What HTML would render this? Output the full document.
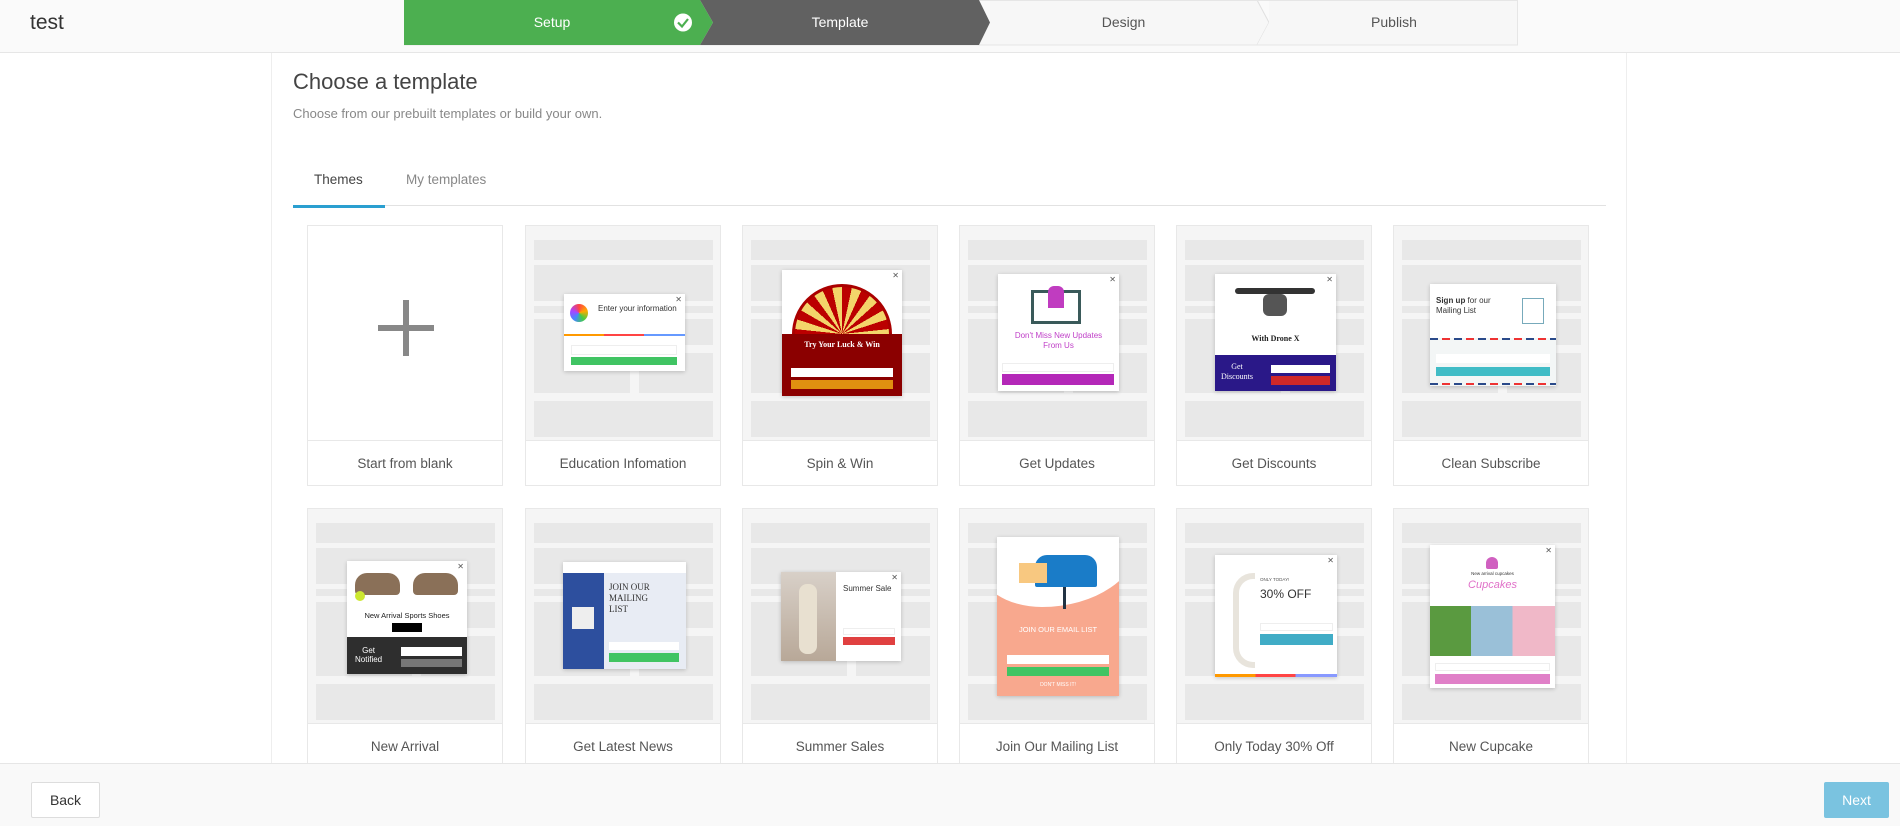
<!DOCTYPE html>
<html><head><meta charset="utf-8"><style>
*{box-sizing:border-box;margin:0;padding:0}
body{width:1900px;height:826px;overflow:hidden;background:#fff;font-family:"Liberation Sans",sans-serif;position:relative;color:#444}
.hdr{position:absolute;left:0;top:0;width:1900px;height:53px;background:#fafafa;border-bottom:1px solid #e6e6e6}
.logo{position:absolute;left:30px;top:11px;font-size:21px;color:#333}
.step{position:absolute;top:0;height:45px;line-height:45px;text-align:center;font-size:14px}
.panel{position:absolute;left:271px;top:53px;width:1356px;height:710px;border-left:1px solid #eee;border-right:1px solid #eee}
h1{position:absolute;left:293px;top:69px;font-size:22px;font-weight:normal;color:#444}
.sub{position:absolute;left:293px;top:106px;font-size:13px;color:#888}
.tab{position:absolute;top:172px;font-size:13.5px}
.card{position:absolute;width:196px;height:261px;border:1px solid #e8e8e8;background:#fff;overflow:hidden}
.img{position:absolute;left:0;top:0;width:194px;height:215px;background:#f5f5f5;border-bottom:1px solid #e8e8e8}
.b{position:absolute;background:#e8e8e8}
.lbl{position:absolute;left:0;top:215px;width:194px;height:46px;line-height:46px;text-align:center;font-size:13.5px;color:#555}
.pop{position:absolute;background:#fff;box-shadow:0 1px 4px rgba(0,0,0,.2);overflow:hidden}
.x{position:absolute;right:3px;top:1px;font-size:8px;color:#555}
.p{position:absolute}
.foot{position:absolute;left:0;top:763px;width:1900px;height:63px;background:#f9f9f9;border-top:1px solid #e6e6e6}
</style></head><body>
<div class="hdr"><div class="logo">test</div></div>
<svg style="position:absolute;left:404px;top:0" width="1115" height="46">
<polygon points="586,0 853,0 865,22.5 853,45 575,45 586,22.5" fill="#f7f7f7"/>
<polyline points="853,0 865,22.5 853,45" fill="none" stroke="#e0e0e0"/>
<polygon points="865,0 1114,0 1114,45 853,45 865,22.5" fill="#f7f7f7"/>
<rect x="0.5" y="0.5" width="1113" height="44.5" fill="none" stroke="#e6e6e6"/>
<polygon points="0,0 296,0 309,22.5 296,45 0,45" fill="#4caf50"/>
<polygon points="296,0 575,0 586,22.5 575,45 296,45 309,22.5" fill="#616161"/>
<circle cx="279" cy="22.5" r="9" fill="#fff"/><polyline points="274,22.5 278,26.5 284,19" fill="none" stroke="#4caf50" stroke-width="2.2"/>
</svg>
<div class="step" style="left:404px;width:296px;color:#fff">Setup</div>
<div class="step" style="left:700px;width:280px;color:#fff">Template</div>
<div class="step" style="left:990px;width:267px;color:#555">Design</div>
<div class="step" style="left:1269px;width:250px;color:#555">Publish</div>
<div class="panel"></div>
<h1>Choose a template</h1>
<div class="sub">Choose from our prebuilt templates or build your own.</div>
<div class="tab" style="left:314px;color:#444">Themes</div>
<div class="tab" style="left:406px;color:#888">My templates</div>
<div style="position:absolute;left:293px;top:205px;width:1313px;height:1px;background:#e2e2e2"></div>
<div style="position:absolute;left:293px;top:205px;width:92px;height:3px;background:#2a9fd0"></div>

<div class="card" style="left:307px;top:225px">
<div style="position:absolute;left:0;top:0;width:194px;height:215px;border-bottom:1px solid #e8e8e8"></div>
<div style="position:absolute;left:70px;top:99px;width:56px;height:6px;background:#888"></div>
<div style="position:absolute;left:95px;top:74px;width:6px;height:56px;background:#888"></div>
<div class="lbl">Start from blank</div></div>

<div class="card" style="left:525px;top:225px"><div class="img">
<div class="b" style="left:8px;top:14px;width:179px;height:20px"></div><div class="b" style="left:8px;top:39px;width:179px;height:36px"></div><div class="b" style="left:8px;top:80px;width:179px;height:7px"></div><div class="b" style="left:8px;top:93px;width:96px;height:74px"></div><div class="b" style="left:113px;top:93px;width:74px;height:26px"></div><div class="b" style="left:113px;top:127px;width:74px;height:40px"></div><div class="b" style="left:8px;top:175px;width:179px;height:36px"></div>
<div class="pop" style="left:38px;top:68px;width:121px;height:77px"><span class="x">✕</span>
<div class="p" style="left:6px;top:10px;width:18px;height:18px;border-radius:50%;background:conic-gradient(#f44,#fa0,#4c4,#48f,#a4f,#f44)"></div>
<div class="p" style="left:34px;top:10px;font-size:8px;color:#333">Enter your information</div>
<div class="p" style="left:0;top:40px;width:121px;height:2px;background:linear-gradient(90deg,#f90 33%,#f44 33% 66%,#69f 66%)"></div>
<div class="p" style="left:7px;top:51px;width:106px;height:10px;border:1px solid #eee"></div>
<div class="p" style="left:7px;top:63px;width:106px;height:8px;background:#40c463"></div></div>
</div><div class="lbl">Education Infomation</div></div>

<div class="card" style="left:742px;top:225px"><div class="img">
<div class="b" style="left:8px;top:14px;width:179px;height:20px"></div><div class="b" style="left:8px;top:39px;width:179px;height:36px"></div><div class="b" style="left:8px;top:80px;width:179px;height:7px"></div><div class="b" style="left:8px;top:93px;width:96px;height:74px"></div><div class="b" style="left:113px;top:93px;width:74px;height:26px"></div><div class="b" style="left:113px;top:127px;width:74px;height:40px"></div><div class="b" style="left:8px;top:175px;width:179px;height:36px"></div>
<div class="pop" style="left:39px;top:44px;width:120px;height:126px"><span class="x">✕</span>
<div class="p" style="left:10px;top:14px;width:100px;height:100px;border-radius:50%;background:repeating-conic-gradient(#b00 0 12deg,#f3d56a 12deg 24deg);border:3px solid #a00"></div>
<div class="p" style="left:0;top:64px;width:120px;height:62px;background:#8b0000"></div>
<div class="p" style="left:0;top:70px;width:120px;text-align:center;font-size:8px;color:#fff;font-family:'Liberation Serif',serif;font-weight:bold">Try Your Luck &amp; Win</div>
<div class="p" style="left:9px;top:98px;width:102px;height:9px;background:#fff"></div>
<div class="p" style="left:9px;top:110px;width:102px;height:9px;background:#e09010"></div></div>
</div><div class="lbl">Spin &amp; Win</div></div>

<div class="card" style="left:959px;top:225px"><div class="img">
<div class="b" style="left:8px;top:14px;width:179px;height:20px"></div><div class="b" style="left:8px;top:39px;width:179px;height:36px"></div><div class="b" style="left:8px;top:80px;width:179px;height:7px"></div><div class="b" style="left:8px;top:93px;width:96px;height:74px"></div><div class="b" style="left:113px;top:93px;width:74px;height:26px"></div><div class="b" style="left:113px;top:127px;width:74px;height:40px"></div><div class="b" style="left:8px;top:175px;width:179px;height:36px"></div>
<div class="pop" style="left:38px;top:48px;width:121px;height:117px"><span class="x">✕</span>
<div class="p" style="left:33px;top:16px;width:50px;height:34px;border:3px solid #3a5a5a;background:#fff"></div>
<div class="p" style="left:50px;top:12px;width:16px;height:22px;background:#c03cc0;border-radius:6px 6px 0 0"></div>
<div class="p" style="left:0;top:57px;width:121px;text-align:center;font-size:8px;color:#c040c8;line-height:10px">Don't Miss New Updates<br>From Us</div>
<div class="p" style="left:4px;top:89px;width:112px;height:9px;border:1px solid #eee"></div>
<div class="p" style="left:4px;top:100px;width:112px;height:11px;background:#b428b8"></div></div>
</div><div class="lbl">Get Updates</div></div>

<div class="card" style="left:1176px;top:225px"><div class="img">
<div class="b" style="left:8px;top:14px;width:179px;height:20px"></div><div class="b" style="left:8px;top:39px;width:179px;height:36px"></div><div class="b" style="left:8px;top:80px;width:179px;height:7px"></div><div class="b" style="left:8px;top:93px;width:96px;height:74px"></div><div class="b" style="left:113px;top:93px;width:74px;height:26px"></div><div class="b" style="left:113px;top:127px;width:74px;height:40px"></div><div class="b" style="left:8px;top:175px;width:179px;height:36px"></div>
<div class="pop" style="left:38px;top:48px;width:121px;height:117px"><span class="x">✕</span>
<div class="p" style="left:20px;top:14px;width:80px;height:6px;background:#333;border-radius:3px"></div>
<div class="p" style="left:48px;top:20px;width:24px;height:22px;background:#555;border-radius:6px"></div>
<div class="p" style="left:0;top:60px;width:121px;text-align:center;font-size:8px;color:#222;font-family:'Liberation Serif',serif;font-weight:bold">With Drone X</div>
<div class="p" style="left:0;top:81px;width:121px;height:36px;background:#2a1888"></div>
<div class="p" style="left:6px;top:88px;font-size:8px;color:#fff;font-family:'Liberation Serif',serif;line-height:10px;text-align:center">Get<br>Discounts</div>
<div class="p" style="left:56px;top:91px;width:59px;height:8px;background:#fff"></div>
<div class="p" style="left:56px;top:102px;width:59px;height:9px;background:#d02828"></div></div>
</div><div class="lbl">Get Discounts</div></div>

<div class="card" style="left:1393px;top:225px"><div class="img">
<div class="b" style="left:8px;top:14px;width:179px;height:20px"></div><div class="b" style="left:8px;top:39px;width:179px;height:36px"></div><div class="b" style="left:8px;top:80px;width:179px;height:7px"></div><div class="b" style="left:8px;top:93px;width:96px;height:74px"></div><div class="b" style="left:113px;top:93px;width:74px;height:26px"></div><div class="b" style="left:113px;top:127px;width:74px;height:40px"></div><div class="b" style="left:8px;top:175px;width:179px;height:36px"></div>
<div class="pop" style="left:36px;top:58px;width:126px;height:102px;background:#f3f6f6"><span class="x">✕</span>
<div class="p" style="left:0;top:0;width:126px;height:54px;background:#fff"></div>
<div class="p" style="left:6px;top:12px;font-size:8px;color:#333;line-height:10px"><b>Sign up</b> for our<br>Mailing List</div>
<div class="p" style="left:92px;top:14px;width:22px;height:26px;border:1px solid #7ab"></div>
<div class="p" style="left:0;top:54px;width:126px;height:2px;background:repeating-linear-gradient(90deg,#2a4a8a 0 8px,transparent 8px 12px,#e33 12px 20px,transparent 20px 24px)"></div>
<div class="p" style="left:6px;top:70px;width:114px;height:9px;background:#fff"></div>
<div class="p" style="left:6px;top:83px;width:114px;height:9px;background:#40bcc6"></div>
<div class="p" style="left:0;top:99px;width:126px;height:2px;background:repeating-linear-gradient(90deg,#2a4a8a 0 8px,transparent 8px 12px,#e33 12px 20px,transparent 20px 24px)"></div></div>
</div><div class="lbl">Clean Subscribe</div></div>

<div class="card" style="left:307px;top:508px"><div class="img">
<div class="b" style="left:8px;top:14px;width:179px;height:20px"></div><div class="b" style="left:8px;top:39px;width:179px;height:36px"></div><div class="b" style="left:8px;top:80px;width:179px;height:7px"></div><div class="b" style="left:8px;top:93px;width:96px;height:74px"></div><div class="b" style="left:113px;top:93px;width:74px;height:26px"></div><div class="b" style="left:113px;top:127px;width:74px;height:40px"></div><div class="b" style="left:8px;top:175px;width:179px;height:36px"></div>
<div class="pop" style="left:39px;top:52px;width:120px;height:113px"><span class="x">✕</span>
<div class="p" style="left:8px;top:12px;width:45px;height:22px;background:#8a7058;border-radius:12px 12px 4px 4px"></div>
<div class="p" style="left:66px;top:12px;width:45px;height:22px;background:#8a7058;border-radius:12px 12px 4px 4px"></div>
<div class="p" style="left:8px;top:30px;width:10px;height:10px;background:#cde830;border-radius:50%"></div>
<div class="p" style="left:0;top:50px;width:120px;text-align:center;font-size:7.5px;color:#222">New Arrival Sports Shoes</div>
<div class="p" style="left:45px;top:62px;width:30px;height:9px;background:#000"></div>
<div class="p" style="left:0;top:76px;width:120px;height:37px;background:#2e2e2e"></div>
<div class="p" style="left:8px;top:85px;font-size:8px;color:#fff;line-height:9px;text-align:center">Get<br>Notified</div>
<div class="p" style="left:54px;top:86px;width:61px;height:9px;background:#fff"></div>
<div class="p" style="left:54px;top:98px;width:61px;height:8px;background:#777"></div></div>
</div><div class="lbl">New Arrival</div></div>

<div class="card" style="left:525px;top:508px"><div class="img">
<div class="b" style="left:8px;top:14px;width:179px;height:20px"></div><div class="b" style="left:8px;top:39px;width:179px;height:36px"></div><div class="b" style="left:8px;top:80px;width:179px;height:7px"></div><div class="b" style="left:8px;top:93px;width:96px;height:74px"></div><div class="b" style="left:113px;top:93px;width:74px;height:26px"></div><div class="b" style="left:113px;top:127px;width:74px;height:40px"></div><div class="b" style="left:8px;top:175px;width:179px;height:36px"></div>
<div class="pop" style="left:37px;top:53px;width:123px;height:107px;background:#e8ecf4"><span class="x">✕</span>
<div class="p" style="left:0;top:0;width:123px;height:11px;background:#fff"></div>
<div class="p" style="left:0;top:11px;width:41px;height:96px;background:#2d4f9e"></div>
<div class="p" style="left:9px;top:45px;width:22px;height:22px;background:#eee"></div>
<div class="p" style="left:46px;top:20px;font-size:9px;color:#333;font-family:'Liberation Serif',serif;line-height:11px">JOIN OUR<br>MAILING<br>LIST</div>
<div class="p" style="left:46px;top:80px;width:70px;height:8px;background:#fff"></div>
<div class="p" style="left:46px;top:91px;width:70px;height:9px;background:#40c463"></div></div>
</div><div class="lbl">Get Latest News</div></div>

<div class="card" style="left:742px;top:508px"><div class="img">
<div class="b" style="left:8px;top:14px;width:179px;height:20px"></div><div class="b" style="left:8px;top:39px;width:179px;height:36px"></div><div class="b" style="left:8px;top:80px;width:179px;height:7px"></div><div class="b" style="left:8px;top:93px;width:96px;height:74px"></div><div class="b" style="left:113px;top:93px;width:74px;height:26px"></div><div class="b" style="left:113px;top:127px;width:74px;height:40px"></div><div class="b" style="left:8px;top:175px;width:179px;height:36px"></div>
<div class="pop" style="left:38px;top:63px;width:120px;height:89px"><span class="x">✕</span>
<div class="p" style="left:0;top:0;width:55px;height:89px;background:linear-gradient(#d8d0c8,#b8a898)"></div>
<div class="p" style="left:18px;top:12px;width:18px;height:70px;background:#e8e0d0;border-radius:8px"></div>
<div class="p" style="left:62px;top:12px;font-size:8px;color:#333">Summer Sale</div>
<div class="p" style="left:62px;top:56px;width:52px;height:7px;border:1px solid #eee"></div>
<div class="p" style="left:62px;top:65px;width:52px;height:8px;background:#e04040"></div></div>
</div><div class="lbl">Summer Sales</div></div>

<div class="card" style="left:959px;top:508px"><div class="img">
<div class="b" style="left:8px;top:14px;width:179px;height:20px"></div><div class="b" style="left:8px;top:39px;width:179px;height:36px"></div><div class="b" style="left:8px;top:80px;width:179px;height:7px"></div><div class="b" style="left:8px;top:93px;width:96px;height:74px"></div><div class="b" style="left:113px;top:93px;width:74px;height:26px"></div><div class="b" style="left:113px;top:127px;width:74px;height:40px"></div><div class="b" style="left:8px;top:175px;width:179px;height:36px"></div>
<div class="pop" style="left:37px;top:28px;width:122px;height:159px;background:#f8a88e"><span class="x">✕</span>
<div class="p" style="left:-20px;top:-40px;width:162px;height:110px;background:#fff;border-radius:0 0 60% 40%"></div>
<div class="p" style="left:38px;top:18px;width:62px;height:32px;background:#1a7cc8;border-radius:12px 12px 2px 2px"></div>
<div class="p" style="left:22px;top:26px;width:28px;height:20px;background:#f8c880"></div>
<div class="p" style="left:66px;top:50px;width:3px;height:22px;background:#234"></div>
<div class="p" style="left:0;top:88px;width:122px;text-align:center;font-size:7.5px;color:#fff">JOIN OUR EMAIL LIST</div>
<div class="p" style="left:10px;top:118px;width:102px;height:9px;background:#fff"></div>
<div class="p" style="left:10px;top:130px;width:102px;height:9px;background:#40c463"></div>
<div class="p" style="left:0;top:145px;width:122px;text-align:center;font-size:5px;color:#fff">DON'T MISS IT!</div></div>
</div><div class="lbl">Join Our Mailing List</div></div>

<div class="card" style="left:1176px;top:508px"><div class="img">
<div class="b" style="left:8px;top:14px;width:179px;height:20px"></div><div class="b" style="left:8px;top:39px;width:179px;height:36px"></div><div class="b" style="left:8px;top:80px;width:179px;height:7px"></div><div class="b" style="left:8px;top:93px;width:96px;height:74px"></div><div class="b" style="left:113px;top:93px;width:74px;height:26px"></div><div class="b" style="left:113px;top:127px;width:74px;height:40px"></div><div class="b" style="left:8px;top:175px;width:179px;height:36px"></div>
<div class="pop" style="left:38px;top:46px;width:122px;height:122px"><span class="x">✕</span>
<div class="p" style="left:18px;top:18px;width:22px;height:95px;border:6px solid #e8e4dc;border-right:none;border-radius:20px 0 0 20px"></div>
<div class="p" style="left:45px;top:22px;font-size:4.5px;color:#555">ONLY TODAY!</div>
<div class="p" style="left:45px;top:32px;font-size:12px;color:#333">30% OFF</div>
<div class="p" style="left:45px;top:68px;width:73px;height:8px;border:1px solid #eee"></div>
<div class="p" style="left:45px;top:79px;width:73px;height:11px;background:#40acc6"></div>
<div class="p" style="left:0;top:119px;width:122px;height:3px;background:linear-gradient(90deg,#f90 33%,#f44 33% 66%,#89f 66%)"></div></div>
</div><div class="lbl">Only Today 30% Off</div></div>

<div class="card" style="left:1393px;top:508px"><div class="img">
<div class="b" style="left:8px;top:14px;width:179px;height:20px"></div><div class="b" style="left:8px;top:39px;width:179px;height:36px"></div><div class="b" style="left:8px;top:80px;width:179px;height:7px"></div><div class="b" style="left:8px;top:93px;width:96px;height:74px"></div><div class="b" style="left:113px;top:93px;width:74px;height:26px"></div><div class="b" style="left:113px;top:127px;width:74px;height:40px"></div><div class="b" style="left:8px;top:175px;width:179px;height:36px"></div>
<div class="pop" style="left:36px;top:36px;width:125px;height:143px"><span class="x">✕</span>
<div class="p" style="left:56px;top:12px;width:12px;height:12px;background:#d060c0;border-radius:50% 50% 2px 2px"></div>
<div class="p" style="left:0;top:26px;width:125px;text-align:center;font-size:4.5px;color:#333">New arrival cupcakes</div>
<div class="p" style="left:0;top:34px;width:125px;text-align:center;font-size:11px;color:#e070c8;font-style:italic">Cupcakes</div>
<div class="p" style="left:0;top:61px;width:125px;height:50px;background:linear-gradient(90deg,#5a9a40 0 33%,#9ac0d8 33% 66%,#f0b8c8 66%)"></div>
<div class="p" style="left:5px;top:118px;width:115px;height:8px;border:1px solid #eee"></div>
<div class="p" style="left:5px;top:129px;width:115px;height:10px;background:#e080c8"></div></div>
</div><div class="lbl">New Cupcake</div></div>

<div class="foot">
<div style="position:absolute;left:31px;top:18px;width:69px;height:36px;background:#fff;border:1px solid #ddd;border-radius:2px;text-align:center;line-height:34px;font-size:14px;color:#333">Back</div>
<div style="position:absolute;left:1824px;top:18px;width:65px;height:36px;background:#7ac3e0;border-radius:2px;text-align:center;line-height:36px;font-size:14px;color:#fff">Next</div>
</div>
</body></html>
